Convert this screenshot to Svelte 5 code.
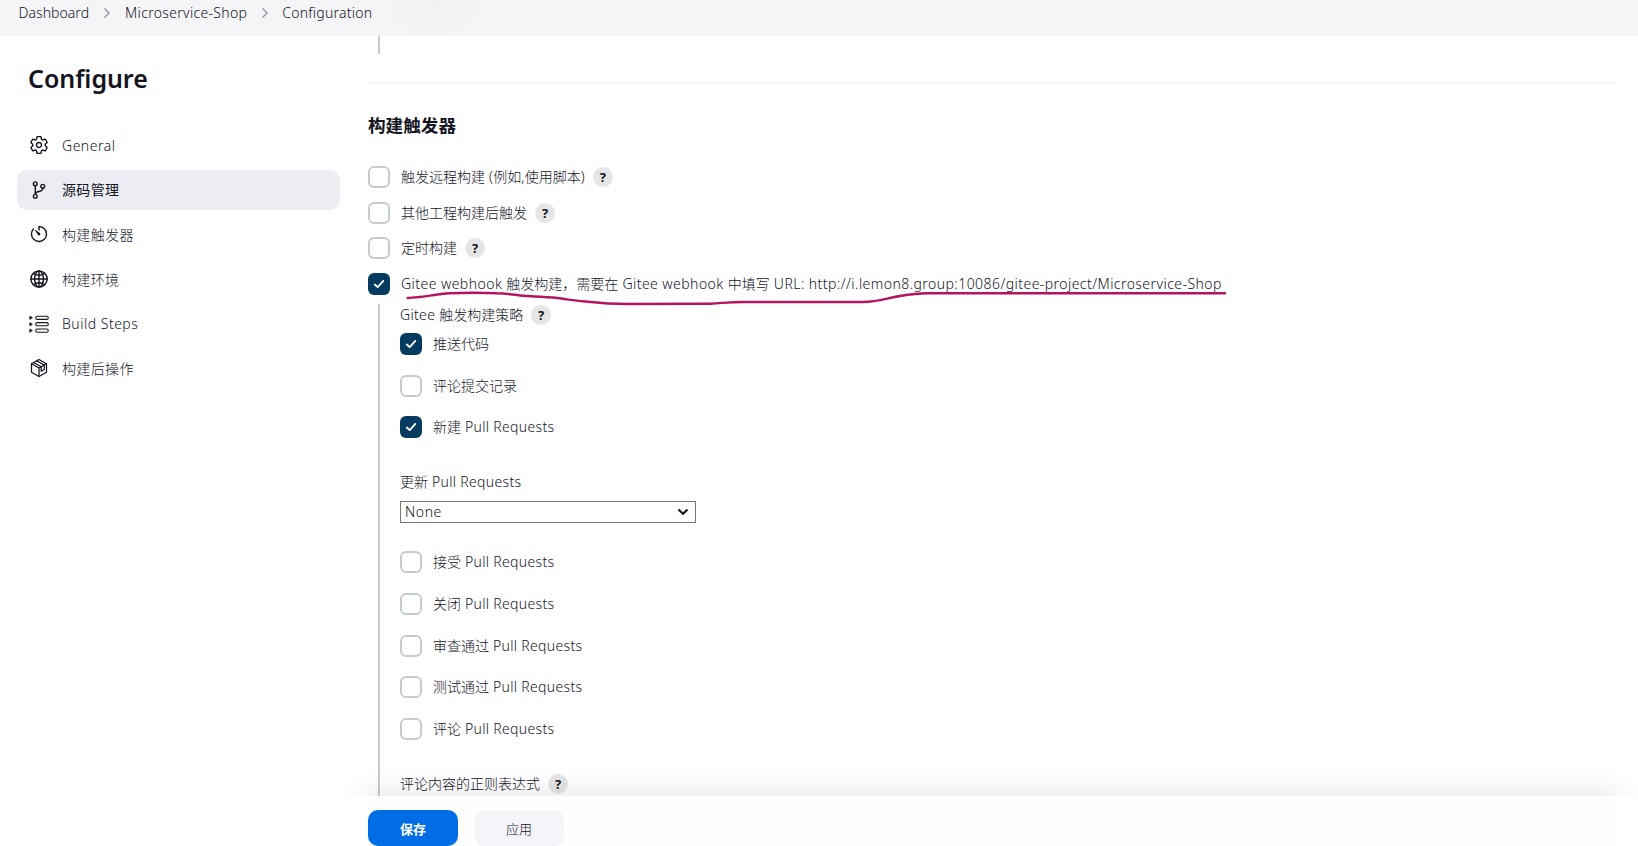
<script>
  const crumbs = [
    { label: 'Dashboard', track: 0.05 },
    { label: 'Microservice-Shop', track: 0.31 },
    { label: 'Configuration', track: 0.24 }
  ];
  const nav = [
    { icon: 'gear', label: 'General' },
    { icon: 'branch', label: '源码管理', active: true },
    { icon: 'timer', label: '构建触发器' },
    { icon: 'globe', label: '构建环境' },
    { icon: 'list', label: 'Build Steps' },
    { icon: 'cube', label: '构建后操作' }
  ];
  const triggers = [
    { label: '触发远程构建 (例如,使用脚本)', help: true, h: 36 },
    { label: '其他工程构建后触发', help: true, h: 35 },
    { label: '定时构建', help: true, h: 36 }
  ];
  const hook = 'Gitee webhook 触发构建，需要在 Gitee webhook 中填写 URL: http://i.lemon8.group:10086/gitee-project/Microservice-Shop';
  const first = [
    { label: '推送代码', on: true, h: 42 },
    { label: '评论提交记录', h: 41 },
    { label: '新建 Pull Requests', on: true, h: 22 }
  ];
  const second = [
    { label: '接受 Pull Requests', h: 42 },
    { label: '关闭 Pull Requests', h: 42 },
    { label: '审查通过 Pull Requests', h: 41 },
    { label: '测试通过 Pull Requests', h: 42 },
    { label: '评论 Pull Requests', h: 22 }
  ];
  // Latin runs carry a little extra tracking; Chinese runs keep the full-width pitch.
  const runs = (s) =>
    (s.match(/[\x20-\xff]+|[^\x20-\xff]+/g) ?? []).map((t) => ({ t, latin: t.charCodeAt(0) < 256 }));
</script>

{#snippet text(s)}<span class="text">{#each runs(s) as r}<span class:latin={r.latin}>{r.t}</span>{/each}</span>{/snippet}

{#snippet box(on)}
  <span class="box" class:on>
    {#if on}
      <svg width="22" height="22" viewBox="0 0 22 22"><path d="M6.8 11.500l2.900 2.700 5.600-6.300" /></svg>
    {/if}
  </span>
{/snippet}

{#snippet row(item)}
  <div class="row" style:height="{item.h}px">
    <label class="check">{@render box(item.on)}{@render text(item.label)}</label>
    {#if item.help}<span class="help">?</span>{/if}
  </div>
{/snippet}

<div class="page">
  <header>
    {#each crumbs as c, i}
      {#if i}
        <svg class="sep" width="8" height="12" viewBox="0 0 8 12"><path d="M1.5 1.5L6 6l-4.500 4.500" /></svg>
      {/if}
      <span class="crumb" style:letter-spacing="{c.track}px">{c.label}</span>
    {/each}
  </header>

  <div class="columns">
    <aside>
      <h1>Configure</h1>
      <nav>
        {#each nav as n}
          <a class:active={n.active} class={n.icon}>
            <svg width="20" height="20" viewBox="0 0 512 512">
              {#if n.icon === 'gear'}
                <path d="M262.290 192.310a64 64 0 1057.400 57.400 64.130 64.130 0 00-57.400-57.400zM416.390 256a154.340 154.340 0 01-1.530 20.790l45.210 35.460a10.810 10.810 0 012.450 13.750l-42.770 74a10.810 10.810 0 01-13.140 4.590l-44.900-18.080a16.110 16.110 0 00-15.170 1.750A164.480 164.480 0 01325 400.800a15.940 15.940 0 00-8.820 12.140l-6.730 47.890a11.080 11.080 0 01-10.680 9.170h-85.540a11.110 11.110 0 01-10.690-8.870l-6.720-47.820a16.070 16.070 0 00-9-12.220 155.300 155.300 0 01-21.460-12.570 16 16 0 00-15.110-1.710l-44.890 18.070a10.810 10.810 0 01-13.140-4.580l-42.770-74a10.800 10.800 0 012.450-13.750l38.210-30a16.050 16.050 0 006-14.080c-.36-4.170-.58-8.330-.58-12.500s.21-8.270.58-12.350a16 16 0 00-6.070-13.940l-38.190-30A10.810 10.810 0 0149.480 186l42.770-74a10.810 10.810 0 0113.140-4.590l44.900 18.080a16.110 16.110 0 0015.170-1.750A164.480 164.480 0 01187 111.200a15.940 15.940 0 008.820-12.140l6.730-47.890A11.080 11.080 0 01213.230 42h85.540a11.110 11.110 0 0110.690 8.870l6.720 47.820a16.070 16.070 0 009 12.220 155.300 155.300 0 0121.460 12.570 16 16 0 0015.110 1.710l44.890-18.070a10.810 10.810 0 0113.140 4.580l42.770 74a10.800 10.800 0 01-2.450 13.750l-38.210 30a16.050 16.050 0 00-6.050 14.080c.33 4.140.55 8.300.55 12.470z" />
              {:else if n.icon === 'branch'}
                <circle cx="160" cy="96" r="48" /><circle cx="160" cy="416" r="48" /><circle cx="352" cy="160" r="48" />
                <path d="M160 368V144M352 208c0 128-192 48-192 160" />
              {:else if n.icon === 'timer'}
                <path d="M112.910 128A191.850 191.850 0 0064 254c-1.180 106.350 85.650 193.800 192 194 106.200.2 192-85.830 192-192 0-104.540-83.550-189.610-187.500-192a4.360 4.360 0 00-4.500 4.370V152" />
                <path d="M233.380 278.630l-79-113a8.130 8.130 0 0111.320-11.320l113 79a32.500 32.500 0 01-37.250 53.260 33.210 33.210 0 01-8.070-7.940z" class="solid" />
              {:else if n.icon === 'globe'}
                <path d="M256 48C141.130 48 48 141.130 48 256s93.130 208 208 208 208-93.130 208-208S370.870 48 256 48z" />
                <path d="M256 48c-58.070 0-112.670 93.130-112.670 208S197.930 464 256 464s112.670-93.130 112.670-208S314.070 48 256 48zM117.330 117.330c38.240 27.150 86.380 43.340 138.670 43.340s100.430-16.190 138.670-43.340M394.670 394.670c-38.240-27.150-86.380-43.340-138.670-43.340s-100.430 16.190-138.670 43.340M256 48v416M464 256H48" />
              {:else if n.icon === 'list'}
                <rect x="172" y="56" width="320" height="82" rx="36" /><rect x="172" y="220" width="320" height="82" rx="36" /><rect x="172" y="384" width="320" height="82" rx="36" />
                <path d="M24 64v66l56-33zM24 228v66l56-33zM24 392v66l56-33z" />
              {:else}
                <path d="M448 364V148L256 40 64 148v216l192 108z" />
                <path d="M64 148l192 108 192-108M256 472V256M118 114l194 110v114l78-44V180L196 74" />
              {/if}
            </svg>
            <span>{n.label}</span>
          </a>
        {/each}
      </nav>
    </aside>

    <main>
      <div class="scroll">
        <div class="tail"></div>
        <hr />
        <h2>构建触发器</h2>
        {#each triggers as t}{@render row(t)}{/each}
        <div class="row hook" style:height="31px">
          <label class="check">{@render box(true)}{@render text(hook)}</label>
          <svg class="stroke" width="824" height="18" viewBox="0 0 824 18">
            <path d="M3.700 8C18 7.500 30 4.500 46 3.300C62 2.500 78 2.500 93 3.300C106 3.700 112 5 119 5.700C135 7 147 7 157 8.500C168 10 172 11 184 11.700C200 13.500 210 14 223 14C255 14 280 14 306 13.700C320 13 325 12 340 12L459 12C474 12 482 8.300 496 6C508 4 514 3.300 524 3.300L821 3.300" />
          </svg>
        </div>
        <div class="nested">
          <div class="caption strategy">{@render text('Gitee 触发构建策略')}<span class="help">?</span></div>
          {#each first as t}{@render row(t)}{/each}
          <div class="caption update">{@render text('更新 Pull Requests')}</div>
          <div class="select"><span>None</span><svg width="12" height="8" viewBox="0 0 12 8"><path d="M1.500 1.500L6 5.700l4.500-4.200" /></svg></div>
          {#each second as t}{@render row(t)}{/each}
          <div class="caption regex">{@render text('评论内容的正则表达式')}<span class="help">?</span></div>
        </div>
      </div>
      <footer>
        <button class="save">保存</button>
        <button>应用</button>
      </footer>
    </main>
  </div>
</div>

<style>
  :global(body) { overflow: hidden; background: #fff; }
  .page {
    height: 846px; display: flex; flex-direction: column; overflow: hidden;
    font-family: 'Noto Sans', 'Noto Sans CJK SC', sans-serif;
    font-size: 14px; font-weight: 300; color: #14141f;
  }
  .page * { box-sizing: border-box; }
  svg { fill: none; stroke: currentColor; flex: none; }
  header {
    height: 36px; flex: none; display: flex; align-items: flex-start; padding-left: 18.500px;
    background: radial-gradient(ellipse 55px 34px at 434px 6px, #f1f1f3, #f5f5f7);
  }
  .crumb { line-height: 26px; white-space: nowrap; }
  .sep { margin: 7px 13px 0 14px; color: #9a9aac; stroke-width: 1.5; }
  .sep:first-of-type { margin-right: 14px; }
  .columns { flex: 1; min-height: 0; display: flex; }
  aside { width: 357px; flex: none; padding: 23px 17px 0; }
  h1 { margin: 0 0 32px 11px; font-size: 25px; line-height: 38px; font-weight: 600; letter-spacing: -0.060px; }
  nav { display: flex; flex-direction: column; gap: 4.650px; margin-top: -4px; }
  a {
    height: 40px; display: flex; align-items: center; gap: 13px; padding-left: 12px;
    border-radius: 10px; letter-spacing: 0.350px;
  }
  a svg { stroke-width: 36; stroke-linecap: round; stroke-linejoin: round; }
  a .solid { fill: currentColor; stroke: none; }
  a.gear, a.list { letter-spacing: 0.500px; }
  a.list svg { stroke-width: 28; }
  a.cube svg { stroke-width: 32; }
  a.active { background: #ecedf3; font-weight: 400; }
  a.active span { margin-top: -1px; }
  main { flex: 1; min-width: 0; display: flex; flex-direction: column; }
  .scroll { height: 760px; flex: none; padding: 0 22px 0 11px; overflow: hidden; }
  .tail { height: 18px; width: 2px; margin-left: 10px; background: #c3ccd1; }
  hr { height: 2px; border: 0; margin: 28px 0 0; background: #f3f3f8; }
  h2 { margin: 27px 0 27px; font-size: 17.600px; line-height: 28px; font-weight: 700; }
  .row { display: flex; align-items: flex-start; }
  .check { height: 22px; display: flex; align-items: center; gap: 11px; }
  .text { line-height: 22px; white-space: pre; }
  .latin { letter-spacing: 0.320px; }
  .hook .latin { letter-spacing: 0.445px; }
  .box { width: 22px; height: 22px; flex: none; display: block; border: 2px solid #c3ccd1; border-radius: 6px; background: #fff; }
  .box.on { border: 0; background: #053b61; }
  .box svg { display: block; stroke: #fff; stroke-width: 1.800; stroke-linecap: round; stroke-linejoin: round; }
  .help {
    width: 20px; height: 20px; margin: 1px 0 0 8px; border-radius: 50%; flex: none;
    background: #e5e5e5; font-size: 13px; line-height: 20px; font-weight: 700; text-align: center;
  }
  .hook { position: relative; }
  .stroke { position: absolute; left: 36px; top: 17px; stroke: #b5135f; stroke-width: 2.400; stroke-linecap: round; }
  .nested { margin-left: 10px; padding-left: 20px; border-left: 2px solid #c3ccd1; }
  .caption { display: flex; align-items: flex-start; }
  .strategy { height: 29px; }
  .update { margin-top: 33px; height: 30px; }
  .regex { margin-top: 33px; height: 40px; }
  .select {
    width: 296px; height: 22px; margin-bottom: 28px; padding: 0 6px 0 4px; border: 1px solid #767676;
    display: flex; align-items: center; justify-content: space-between; line-height: 20px; letter-spacing: 0.600px;
  }
  .select svg { stroke-width: 2.200; }
  footer {
    position: relative; height: 50px; flex: none; margin: 0 22px 0 11px; padding-top: 14px;
    display: flex; gap: 16px; background: #fefefe; box-shadow: 0 0 30px 3px rgba(0, 0, 0, 0.100);
    clip-path: polygon(-40px -40px, calc(100% + 40px) -40px, calc(100% + 40px) 0, 100% 0, 100% 100%, 0 100%, 0 0, -40px 0);
  }
  button {
    width: 90px; height: 36px; padding: 0; border: 0; border-radius: 10px; background: #f5f5f9;
    color: #14141f; font: inherit; font-size: 13px;
  }
  .save { background: #006ce6; color: #fff; font-weight: 700; }
</style>
